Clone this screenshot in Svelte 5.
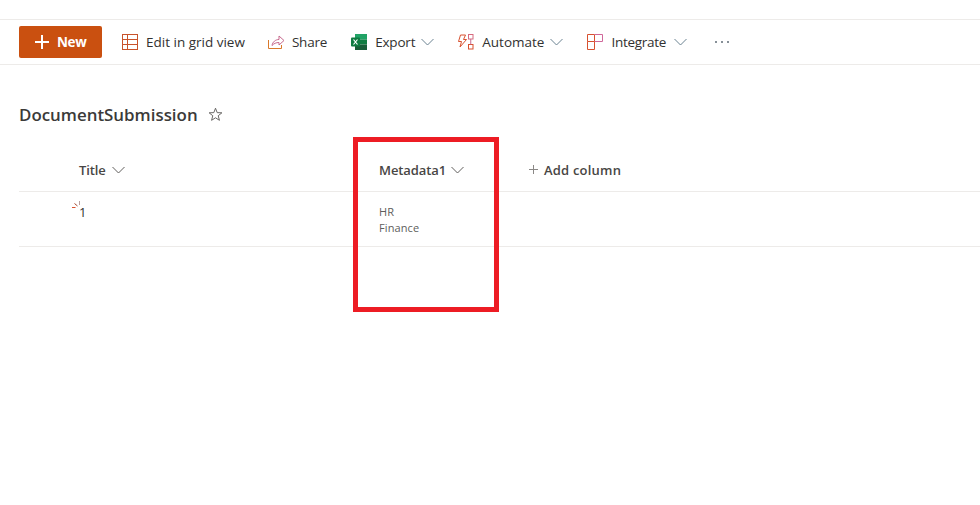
<script lang="ts">
  const columns = ['HR', 'Finance'];
</script>

<div class="page">
  <div class="commandbar">
    <button class="new-btn">
      <svg width="16" height="16" viewBox="0 0 16 16"><path d="M8 1v14M1 8h14" stroke="#fff" stroke-width="2" fill="none" /></svg>
      <span>New</span>
    </button>

    <button class="cmd grid-cmd">
      <svg width="16" height="16" viewBox="0 0 16 16" fill="none" stroke="#c8532a" stroke-width="1">
        <rect x="0.5" y="0.5" width="15" height="15" />
        <path d="M0.5 5.5h15M0.5 10.5h15M5.5 0.5v15" />
      </svg>
      <span>Edit in grid view</span>
    </button>

    <button class="cmd share-cmd">
      <svg width="17" height="16" viewBox="0 0 17 16" fill="none">
        <path d="M0.5 6v8.500h13V11" stroke="#d9792b" />
        <path d="M4 11.500c.5-3.500 3.500-6 7-6V2l5 4.500-5 4.500V8.500c-3 0-5 1-7 3z" stroke="#c76a8e" />
      </svg>
      <span>Share</span>
    </button>

    <button class="cmd export-cmd">
      <svg width="16" height="16" viewBox="0 0 16 16">
        <rect x="4" y="0" width="12" height="5.500" fill="#21a366" />
        <rect x="4" y="5.500" width="12" height="5" fill="#107c41" />
        <rect x="4" y="10.500" width="12" height="5.500" fill="#185c37" />
        <rect x="0" y="3.500" width="9" height="9" rx="1" fill="#0f7b41" />
        <path d="M2.500 5.500l4 5M6.500 5.500l-4 5" stroke="#fff" stroke-width="1.200" />
      </svg>
      <span>Export</span>
      <svg class="chev" width="13" height="8" viewBox="0 0 13 8"><path d="M0.500 1l6 6 6-6" /></svg>
    </button>

    <button class="cmd automate-cmd">
      <svg width="17" height="16" viewBox="0 0 17 16" fill="none">
        <path d="M3.500 1h5L6.500 5.500h3L3 13l1.500-5.500H1.500z" stroke="#d8512f" />
        <rect x="11.500" y="0.500" width="4.500" height="4.500" stroke="#d66a7f" />
        <rect x="11.500" y="10.500" width="4.500" height="4.500" stroke="#d8512f" />
        <path d="M13.750 5v5.500" stroke="#c76a8e" />
      </svg>
      <span>Automate</span>
      <svg class="chev" width="13" height="8" viewBox="0 0 13 8"><path d="M0.500 1l6 6 6-6" /></svg>
    </button>

    <button class="cmd integrate-cmd">
      <svg width="16" height="16" viewBox="0 0 16 16" fill="none">
        <path d="M0.500 7.500V0.500h7v7z" stroke="#d8512f" />
        <path d="M7.500 0.500h8v7h-8" stroke="#d0689a" />
        <path d="M0.500 7.500v8h7v-8" stroke="#d8512f" />
      </svg>
      <span>Integrate</span>
      <svg class="chev" width="13" height="8" viewBox="0 0 13 8"><path d="M0.500 1l6 6 6-6" /></svg>
    </button>

    <button class="more" aria-label="More">
      <i></i><i></i><i></i>
    </button>
  </div>

  <div class="list-title">
    <h1>DocumentSubmission</h1>
    <svg width="15" height="15" viewBox="0 0 16 16" fill="none" stroke="#605e5c">
      <path d="M8 1.300l1.800 4.700 5 .2-3.900 3.100 1.300 4.900L8 11.500l-4.200 2.700 1.300-4.900-3.900-3.100 5-.2z" />
    </svg>
  </div>

  <div class="table">
    <div class="row head">
      <div class="cell title-col">
        <span>Title</span>
        <svg class="chev light" width="13" height="8" viewBox="0 0 13 8"><path d="M0.500 1l6 6 6-6" /></svg>
      </div>
      <div class="cell meta-col">
        <span>Metadata1</span>
        <svg class="chev light" width="13" height="8" viewBox="0 0 13 8"><path d="M0.500 1l6 6 6-6" /></svg>
      </div>
      <div class="cell add-col">
        <svg width="9" height="9" viewBox="0 0 9 9"><path d="M4.500 0v9M0 4.500h9" stroke="#8a8886" fill="none" /></svg>
        <span>Add column</span>
      </div>
    </div>
    <div class="row body">
      <div class="cell title-col">
        <span class="item-title">
          <svg class="new-mark" width="9" height="9" viewBox="0 0 9 9" fill="none">
            <path d="M0 6.500h3.500" stroke="#d8512f" />
            <path d="M2.500 2.500l3 2.500" stroke="#a4432a" />
            <path d="M7.500 0v4" stroke="#b9a0a0" />
          </svg>
          1
        </span>
      </div>
      <div class="cell meta-col">
        <ul>
          {#each columns as item}
            <li>{item}</li>
          {/each}
        </ul>
      </div>
    </div>
  </div>

  <div class="callout"></div>
</div>

<style>
  :global(body) {
    margin: 0;
    background: #fff;
  }

  .page {
    position: relative;
    height: 505px;
    overflow: hidden;
    font-family: "Open Sans", "Liberation Sans", sans-serif;
    color: #323130;
    padding-top: 19px;
    box-sizing: border-box;
  }

  button {
    font-family: inherit;
    background: none;
    border: 0;
    padding: 0;
    color: inherit;
  }

  /* ---- Command bar ---- */
  .commandbar {
    height: 44px;
    border-top: 1px solid #edebe9;
    border-bottom: 1px solid #edebe9;
    display: flex;
    align-items: center;
    padding-left: 19px;
  }

  .new-btn {
    width: 83px;
    height: 32px;
    background: #ca5010;
    color: #fff;
    border-radius: 2px;
    display: flex;
    align-items: center;
    gap: 7px;
    padding-left: 15px;
    box-sizing: border-box;
    font-size: 13.500px;
    font-weight: 700;
    letter-spacing: -0.4px;
  }

  .cmd {
    display: flex;
    align-items: center;
    font-size: 13.500px;
    letter-spacing: -0.2px;
    white-space: nowrap;
  }

  .cmd span {
    margin-left: 8px;
  }

  .grid-cmd { margin-left: 20px; letter-spacing: 0; }
  .share-cmd { margin-left: 23px; }
  .share-cmd span { margin-left: 7px; }
  .export-cmd { margin-left: 24px; }
  .automate-cmd { margin-left: 23px; letter-spacing: 0; }
  .integrate-cmd { margin-left: 24px; letter-spacing: -0.3px; }

  .chev {
    fill: none;
    stroke: #605e5c;
    margin-left: 6px;
  }

  .cmd .chev {
    stroke: #6b8291;
  }

  .integrate-cmd .chev {
    margin-left: 8px;
  }

  .more {
    margin-left: 28px;
    display: flex;
    gap: 4px;
  }

  .more i {
    width: 2px;
    height: 2px;
    border-radius: 50%;
    background: #5f6b76;
  }

  /* ---- Title ---- */
  .list-title {
    display: flex;
    align-items: center;
    gap: 10px;
    margin: 36px 0 0 19px;
    height: 26px;
  }

  h1 {
    margin: 0;
    font-size: 16.900px;
    font-weight: 600;
    color: #3b3a39;
  }

  /* ---- List ---- */
  .table {
    margin: 23px 0 0 19px;
    font-size: 13px;
  }

  .row {
    display: flex;
  }

  .head {
    height: 39px;
    padding-bottom: 2px;
    border-bottom: 1px solid #edebe9;
    align-items: center;
    font-weight: 600;
    letter-spacing: -0.1px;
    color: #484644;
  }

  .body {
    height: 54px;
    border-bottom: 1px solid #edebe9;
  }

  .cell {
    display: flex;
    align-items: center;
    box-sizing: border-box;
  }

  .head .chev {
    margin-left: 6px;
  }

  .head .meta-col .chev {
    margin-left: 5px;
  }

  .title-col {
    width: 360px;
    padding-left: 60px;
  }

  .meta-col {
    width: 150px;
  }

  .add-col {
    gap: 6px;
    letter-spacing: 0.2px;
  }

  .body .cell {
    align-items: flex-start;
  }

  .item-title {
    position: relative;
    font-size: 13px;
    margin-top: 11px;
    line-height: 18px;
    color: #323130;
  }

  .new-mark {
    position: absolute;
    left: -7px;
    top: -2px;
  }

  ul {
    list-style: none;
    margin: 12px 0 0;
    padding: 0;
    font-size: 11px;
    line-height: 16px;
    letter-spacing: 0.1px;
    color: #605e5c;
  }

  /* red annotation drawn over the screenshot */
  .callout {
    position: absolute;
    left: 353px;
    top: 137px;
    width: 146px;
    height: 175px;
    border: 5px solid #ed1c24;
    box-sizing: border-box;
  }
</style>
